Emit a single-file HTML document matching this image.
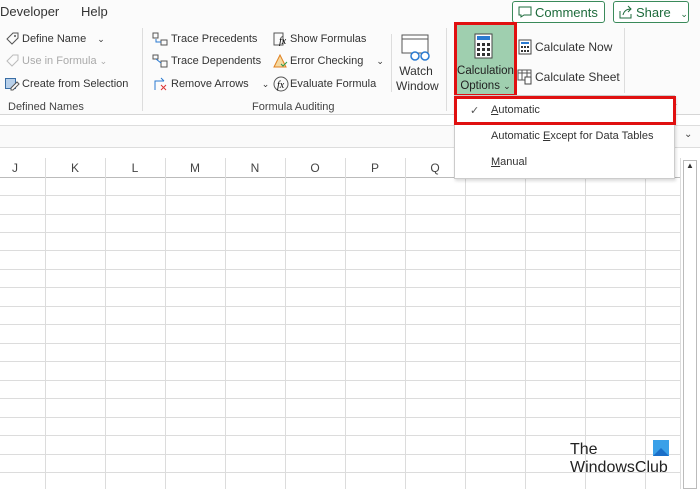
<!DOCTYPE html><html><head><style>
*{margin:0;padding:0;box-sizing:border-box}
body{width:700px;height:489px;overflow:hidden;background:#fff;font-family:"Liberation Sans",sans-serif;font-size:11px;color:#333;position:relative}
.a{position:absolute;white-space:nowrap}
.g{color:#aaa}
</style></head><body>
<div class="a" style="left:0;top:0;width:700px;height:115px;background:#fbfbfb;border-bottom:1px solid #d6d6d6"></div>
<div class="a" style="left:0;top:4px;font-size:13px">Developer</div>
<div class="a" style="left:81px;top:4px;font-size:13px">Help</div>
<div class="a" style="left:512px;top:1px;width:93px;height:22px;border:1px solid #3a8a5a;border-radius:3px;background:#fff;color:#1e6b3c;font-size:13px;padding:3px 0 0 22px">Comments</div>
<div class="a" style="left:613px;top:1px;width:76px;height:22px;border:1px solid #3a8a5a;border-radius:3px;background:#fff;color:#1e6b3c;font-size:13px;padding:3px 0 0 22px">Share <span style="font-size:9px;margin-left:6px">⌄</span></div>
<svg class="a" style="left:518px;top:6px" width="14" height="12"><path d="M1 1h12v8H6l-3 2V9H1z" fill="none" stroke="#1e6b3c"/></svg>
<svg class="a" style="left:619px;top:5px" width="14" height="14"><path d="M1 6v7h11V9M4 10c1-4 4-6 8-6M9 1l3 3-3 3" fill="none" stroke="#1e6b3c"/></svg>

<svg class="a" style="left:5px;top:32px" width="14" height="14"><path d="M2 7l6-6h5v5l-6 6z" fill="none" stroke="#555"/><circle cx="10" cy="4" r="1" fill="#555"/></svg>
<div class="a" style="left:22px;top:33px">Define Name <span style="margin-left:8px;font-size:9px">⌄</span></div>
<svg class="a" style="left:5px;top:54px" width="14" height="14"><path d="M2 7l6-6h5v5l-6 6z" fill="none" stroke="#bbb"/></svg>
<div class="a g" style="left:22px;top:55px">Use in Formula <span style="font-size:9px">⌄</span></div>
<svg class="a" style="left:5px;top:77px" width="15" height="14"><rect x="0.5" y="1.5" width="10" height="10" fill="#b8d0ea" stroke="#3a6ea5"/><path d="M6 11l6-6 2 2-6 6H6z" fill="#fff" stroke="#555"/></svg>
<div class="a" style="left:22px;top:78px">Create from Selection</div>
<div class="a" style="left:8px;top:101px;font-size:11px;color:#444">Defined Names</div>
<div class="a" style="left:142px;top:28px;width:1px;height:83px;background:#ddd"></div>

<svg class="a" style="left:152px;top:32px" width="16" height="14"><rect x="1" y="1" width="5" height="5" fill="none" stroke="#555"/><rect x="9" y="8" width="6" height="5" fill="none" stroke="#555"/><path d="M4 7v3h5" stroke="#2a7ad0" fill="none"/></svg>
<div class="a" style="left:171px;top:33px">Trace Precedents</div>
<svg class="a" style="left:152px;top:54px" width="16" height="14"><rect x="1" y="1" width="5" height="4" fill="none" stroke="#555"/><rect x="9" y="7" width="6" height="6" fill="none" stroke="#555"/><path d="M4 5l5 4" stroke="#2a7ad0"/></svg>
<div class="a" style="left:171px;top:55px">Trace Dependents</div>
<svg class="a" style="left:152px;top:76px" width="16" height="16"><path d="M3 14V5h9M9 2l3 3" stroke="#2a7ad0" fill="none"/><path d="M9 9l5 5M14 9l-5 5" stroke="#d33"/></svg>
<div class="a" style="left:171px;top:78px">Remove Arrows <span style="margin-left:10px;font-size:9px">⌄</span></div>
<svg class="a" style="left:273px;top:32px" width="16" height="14"><rect x="1" y="1" width="9" height="12" fill="none" stroke="#555"/><text x="6" y="12" font-size="10" font-style="italic" font-family="Liberation Serif">fx</text></svg>
<div class="a" style="left:290px;top:33px">Show Formulas</div>
<svg class="a" style="left:273px;top:54px" width="16" height="14"><path d="M7 1L1 13h12z" fill="#f5d9a0" stroke="#e08020"/><path d="M8 10l2 2 4-4" stroke="#2a9a4a" fill="none"/></svg>
<div class="a" style="left:290px;top:55px">Error Checking <span style="margin-left:10px;font-size:9px">⌄</span></div>
<svg class="a" style="left:273px;top:76px" width="16" height="16"><circle cx="8" cy="8" r="7" fill="none" stroke="#555"/><text x="4" y="12" font-size="10" font-style="italic" font-family="Liberation Serif">fx</text></svg>
<div class="a" style="left:290px;top:78px">Evaluate Formula</div>
<div class="a" style="left:252px;top:101px;font-size:11px;color:#444">Formula Auditing</div>
<div class="a" style="left:391px;top:34px;width:1px;height:58px;background:#ddd"></div>
<svg class="a" style="left:401px;top:34px" width="30" height="28"><rect x="1" y="1" width="26" height="18" fill="#fff" stroke="#555"/><line x1="1" y1="5" x2="27" y2="5" stroke="#555"/><circle cx="14" cy="22" r="4" fill="#fff" stroke="#2a7ad0" stroke-width="1.5"/><circle cx="24" cy="22" r="4" fill="#fff" stroke="#2a7ad0" stroke-width="1.5"/></svg>
<div class="a" style="left:396px;top:64px;width:40px;text-align:center;line-height:15px;font-size:12px">Watch<br>Window</div>
<div class="a" style="left:446px;top:28px;width:1px;height:83px;background:#ddd"></div>
<div class="a" style="left:624px;top:28px;width:1px;height:65px;background:#ddd"></div>

<div class="a" style="left:454px;top:22px;width:63px;height:75px;background:#9fcfaf;border:3px solid #e01010"></div>
<svg class="a" style="left:474px;top:33px" width="20" height="27"><rect x="1" y="1" width="17" height="24" fill="#fff" stroke="#444"/><rect x="3" y="3" width="13" height="4" fill="#2a7ad0"/><g fill="#333"><rect x="3" y="10" width="3" height="3"/><rect x="8" y="10" width="3" height="3"/><rect x="13" y="10" width="3" height="3"/><rect x="3" y="15" width="3" height="3"/><rect x="8" y="15" width="3" height="3"/><rect x="13" y="15" width="3" height="3"/><rect x="3" y="20" width="3" height="3"/><rect x="8" y="20" width="3" height="3"/><rect x="13" y="20" width="3" height="3"/></g></svg>
<div class="a" style="left:457px;top:64px;width:57px;text-align:center;line-height:15px;color:#222;font-size:11.5px">Calculation<br>Options <span style="font-size:9px">⌄</span></div>
<svg class="a" style="left:518px;top:39px" width="14" height="16"><rect x="1" y="1" width="12" height="14" fill="#fff" stroke="#444"/><rect x="3" y="3" width="8" height="2" fill="#2a7ad0"/><g fill="#333"><rect x="3" y="7" width="2" height="2"/><rect x="6" y="7" width="2" height="2"/><rect x="9" y="7" width="2" height="2"/><rect x="3" y="11" width="2" height="2"/><rect x="6" y="11" width="2" height="2"/><rect x="9" y="11" width="2" height="2"/></g></svg>
<div class="a" style="left:535px;top:40px;font-size:12px">Calculate Now</div>
<svg class="a" style="left:517px;top:69px" width="16" height="16"><rect x="1" y="1" width="13" height="10" fill="#fff" stroke="#555"/><path d="M1 4h13M5 1v10M10 1v10" stroke="#555"/><rect x="8" y="8" width="6" height="7" fill="#fff" stroke="#444"/></svg>
<div class="a" style="left:535px;top:70px;font-size:12px">Calculate Sheet</div>
<div class="a" style="left:671px;top:98px;font-size:12px;color:#555">^</div>

<div class="a" style="left:0;top:125px;width:700px;height:23px;background:#fafafa;border-top:1px solid #ddd;border-bottom:1px solid #ddd"></div>
<div class="a" style="left:684px;top:129px;font-size:10px;color:#444">⌄</div>

<div class="a" style="left:0;top:158px;width:680px;height:20px;background:#fff;border-bottom:1px solid #bbb"></div>
<svg class="a" style="left:0;top:158px" width="682" height="331">
<g stroke="#dcdcdc" stroke-width="1">
<line x1="45.5" y1="0" x2="45.5" y2="331"/><line x1="105.5" y1="0" x2="105.5" y2="331"/><line x1="165.5" y1="0" x2="165.5" y2="331"/><line x1="225.5" y1="0" x2="225.5" y2="331"/><line x1="285.5" y1="0" x2="285.5" y2="331"/><line x1="345.5" y1="0" x2="345.5" y2="331"/><line x1="405.5" y1="0" x2="405.5" y2="331"/><line x1="465.5" y1="0" x2="465.5" y2="331"/><line x1="525.5" y1="0" x2="525.5" y2="331"/><line x1="585.5" y1="0" x2="585.5" y2="331"/><line x1="645.5" y1="0" x2="645.5" y2="331"/><line x1="680.5" y1="0" x2="680.5" y2="331"/>
<line x1="0" y1="37.5" x2="680" y2="37.5"/><line x1="0" y1="56.5" x2="680" y2="56.5"/><line x1="0" y1="74.5" x2="680" y2="74.5"/><line x1="0" y1="92.5" x2="680" y2="92.5"/><line x1="0" y1="111.5" x2="680" y2="111.5"/><line x1="0" y1="129.5" x2="680" y2="129.5"/><line x1="0" y1="148.5" x2="680" y2="148.5"/><line x1="0" y1="166.5" x2="680" y2="166.5"/><line x1="0" y1="185.5" x2="680" y2="185.5"/><line x1="0" y1="203.5" x2="680" y2="203.5"/><line x1="0" y1="222.5" x2="680" y2="222.5"/><line x1="0" y1="240.5" x2="680" y2="240.5"/><line x1="0" y1="259.5" x2="680" y2="259.5"/><line x1="0" y1="277.5" x2="680" y2="277.5"/><line x1="0" y1="296.5" x2="680" y2="296.5"/><line x1="0" y1="314.5" x2="680" y2="314.5"/>
</g>
<g font-family="Liberation Sans" font-size="12" fill="#444" text-anchor="middle">
<text x="15" y="14">J</text><text x="75" y="14">K</text><text x="135" y="14">L</text><text x="195" y="14">M</text><text x="255" y="14">N</text><text x="315" y="14">O</text><text x="375" y="14">P</text><text x="435" y="14">Q</text>
</g></svg>
<div class="a" style="left:683px;top:160px;width:14px;height:329px;border:1px solid #bbb;background:#fff"></div>
<div class="a" style="left:686px;top:161px;font-size:8px">▲</div>

<div class="a" style="left:454px;top:95px;width:221px;height:84px;background:#fff;border:1px solid #ccc;box-shadow:1px 2px 3px rgba(0,0,0,.15)"></div>
<div class="a" style="left:454px;top:96px;width:222px;height:29px;border:3px solid #e01010"></div>
<div class="a" style="left:470px;top:104px;color:#555">✓</div>
<div class="a" style="left:491px;top:104px;color:#333"><u>A</u>utomatic</div>
<div class="a" style="left:491px;top:130px;color:#333">Automatic <u>E</u>xcept for Data Tables</div>
<div class="a" style="left:491px;top:156px;color:#333"><u>M</u>anual</div>

<div class="a" style="left:570px;top:441px;font-size:16px;color:#222;line-height:18px">The<br>WindowsClub</div>
<svg class="a" style="left:653px;top:440px" width="16" height="16"><rect width="16" height="16" fill="#3aa0e8"/><path d="M0 16L8 8 16 16z" fill="#1a6fc8"/></svg>
</body></html>
